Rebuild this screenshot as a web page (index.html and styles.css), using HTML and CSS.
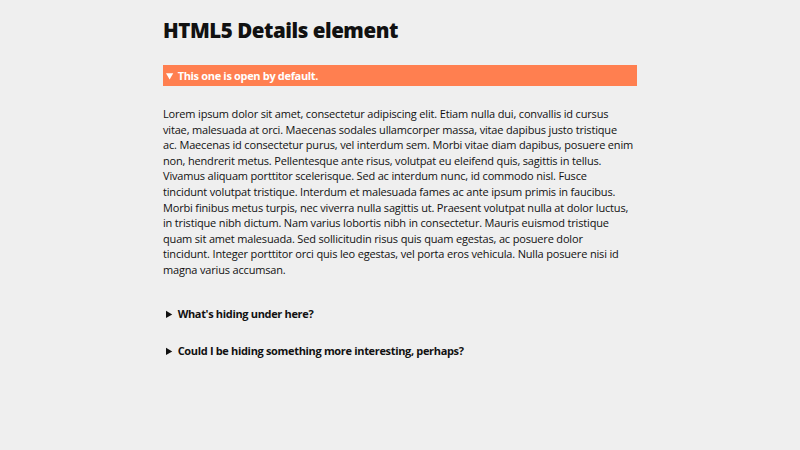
FILE: index.html
```html
<!DOCTYPE html>
<html lang="en">
<head>
<meta charset="utf-8">
<title>HTML5 Details element</title>
<link rel="stylesheet" href="styles.css">
</head>
<body>
<main class="page">
  <h1 class="title">HTML5 Details element</h1>
  <details class="item" open>
    <summary class="item-summary">This one is open by default.</summary>
    <p class="item-body">Lorem ipsum dolor sit amet, consectetur adipiscing elit. Etiam nulla dui, convallis id cursus<br>
vitae, malesuada at orci. Maecenas sodales ullamcorper massa, vitae dapibus justo tristique<br>
ac. Maecenas id consectetur purus, vel interdum sem. Morbi vitae diam dapibus, posuere enim<br>
non, hendrerit metus. Pellentesque ante risus, volutpat eu eleifend quis, sagittis in tellus.<br>
Vivamus aliquam porttitor scelerisque. Sed ac interdum nunc, id commodo nisl. Fusce<br>
tincidunt volutpat tristique. Interdum et malesuada fames ac ante ipsum primis in faucibus.<br>
Morbi finibus metus turpis, nec viverra nulla sagittis ut. Praesent volutpat nulla at dolor luctus,<br>
in tristique nibh dictum. Nam varius lobortis nibh in consectetur. Mauris euismod tristique<br>
quam sit amet malesuada. Sed sollicitudin risus quis quam egestas, ac posuere dolor<br>
tincidunt. Integer porttitor orci quis leo egestas, vel porta eros vehicula. Nulla posuere nisi id<br>
magna varius accumsan.</p>
  </details>
  <details class="item">
    <summary class="item-summary">What's hiding under here?</summary>
  </details>
  <details class="item">
    <summary class="item-summary">Could I be hiding something more interesting, perhaps?</summary>
  </details>
</main>
</body>
</html>
```
FILE: styles.css
```css
html, body {
  margin: 0;
  padding: 0;
  background: #efefef;
}
body {
  font-family: "Open Sans", "Liberation Sans", sans-serif;
  color: #111;
}
.page {
  width: 474px;
  margin: 0 auto;
  padding-top: 14px;
}
.title {
  margin: 0 0 19px;
  font-size: 20.5px;
  line-height: 32px;
  font-weight: 800;
  letter-spacing: -0.45px;
}
.item {
  margin-bottom: 16px;
}
.item-summary {
  font-size: 11px;
  font-weight: 700;
  line-height: 21px;
  padding: 0 3px;
  letter-spacing: -0.33px;
  cursor: pointer;
}
.item[open] > .item-summary {
  background: #ff7f50;
  color: #fff;
}
.item-body {
  margin: 20px 0 25px;
  font-size: 11px;
  line-height: 15.6px;
  letter-spacing: -0.17px;
  white-space: nowrap;
}
```
